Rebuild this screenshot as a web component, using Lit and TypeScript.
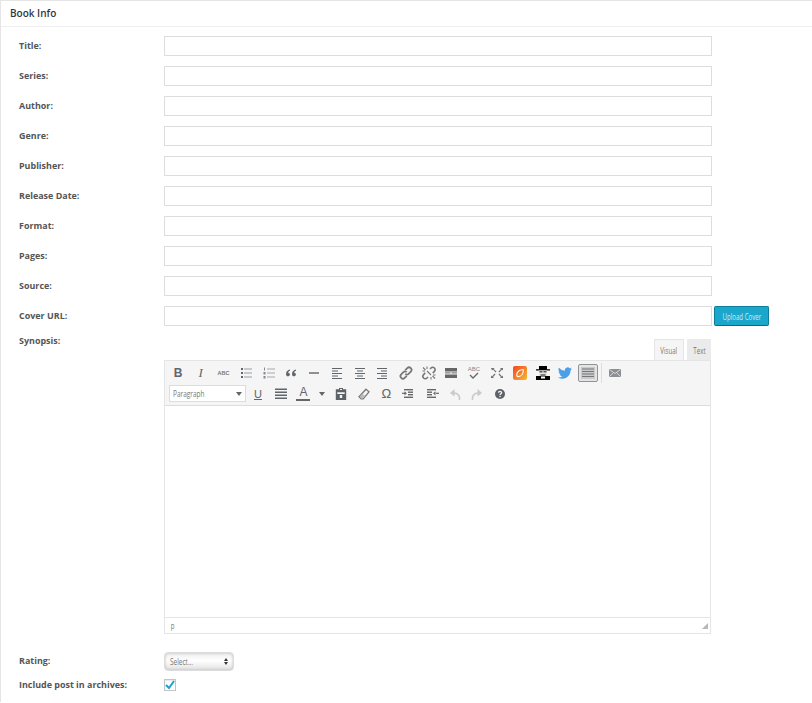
import { LitElement, html, css, svg } from "lit";
import { customElement } from "lit/decorators.js";

const c = "#60666c";
const ic = (body: unknown, size = 16) =>
  html`<svg class="ic" width=${size} height=${size} viewBox="0 0 16 16" fill="none" stroke=${c} stroke-width="1.2">${body}</svg>`;

const align = (rows: [number, number][]) =>
  ic(rows.map(([x, w], i) => svg`<rect x=${x} y=${3 + i * 2.5} width=${w} height="1" fill=${c} stroke="none"/>`));

const icons: Record<string, unknown> = {
  ul: ic(svg`<g fill=${c} stroke="none"><rect x="3" y="3" width="2" height="2"/><rect x="3" y="7" width="2" height="2"/><rect x="3" y="11" width="2" height="2"/><g opacity=".6"><rect x="6" y="3.500" width="8" height="1"/><rect x="6" y="7.500" width="8" height="1"/><rect x="6" y="11.500" width="8" height="1"/></g></g>`),
  ol: ic(svg`<g fill=${c} stroke="none" opacity=".75"><rect x="3" y="2.500" width="1" height="3"/><rect x="2.500" y="7" width="2" height="2.500"/><rect x="2.500" y="11" width="2" height="2.500"/><g opacity=".7"><rect x="6" y="3.500" width="8" height="1"/><rect x="6" y="7.500" width="8" height="1"/><rect x="6" y="11.500" width="8" height="1"/></g></g>`),
  quote: ic(svg`<path fill=${c} stroke="none" d="M7 4.500C4.800 5 3 6.600 3 8.900c0 1.400.9 2.300 1.900 2.300s2-.8 2-1.800-.9-1.700-1.800-1.700C5.200 7 6 6.200 7 5.800zM13 4.500C10.800 5 9 6.600 9 8.900c0 1.400.9 2.300 1.900 2.300s2-.8 2-1.800-.9-1.700-1.800-1.700c.1-.7.900-1.500 1.900-1.900z"/>`),
  hr: ic(svg`<rect x="3" y="7.200" width="10" height="1.600" fill="#777" stroke="none"/>`),
  left: align([[3, 10], [3, 6], [3, 10], [3, 6], [3, 10]]),
  center: align([[3, 10], [5, 6], [3, 10], [5, 6], [3, 10]]),
  right: align([[3, 10], [7, 6], [3, 10], [7, 6], [3, 10]]),
  justify: ic(svg`<g fill=${c} stroke="none"><rect x="2" y="2.500" width="12" height="1.500"/><rect x="2" y="5.500" width="12" height="1.500"/><rect x="2" y="8.500" width="12" height="1.500"/><rect x="2" y="11.500" width="12" height="1.500"/></g>`),
  link: ic(svg`<g stroke="#777" stroke-width="1.700"><path d="M7.200 5.200 9.300 3.100a2.400 2.400 0 0 1 3.500 3.500l-2.200 2.200a2.400 2.400 0 0 1-3.300.1"/><path d="M8.800 10.800 6.700 12.900a2.400 2.400 0 0 1-3.500-3.500l2.200-2.200a2.400 2.400 0 0 1 3.300-.1"/></g>`),
  unlink: ic(svg`<g stroke="#777" stroke-width="1.600"><path d="M9 4 10 3a2.400 2.400 0 0 1 3.400 3.400l-1.600 1.700"/><path d="M7 12 6 13a2.400 2.400 0 0 1-3.400-3.400l1.600-1.700"/><path stroke-width="1.100" d="M2 2.500 4.500 5M11.500 11 14 13.500M6 1.500V4M1.500 6H4M10 12v2.500M12 10h2.500M6 6l4 4"/></g>`),
  more: ic(svg`<g fill="#666" stroke="none"><rect x="2" y="3" width="12" height="3.500"/><rect x="2" y="7.400" width="5.500" height="1"/><rect x="8.500" y="7.400" width="5.500" height="1"/><rect x="2" y="9.500" width="12" height="3.500"/></g>`),
  full: ic(svg`<g fill="#6d7277" stroke="none"><path d="M2 3h3.600L4.600 4l2.900 2.400L6.600 7.400 4 4.600 3 5.600zM14 3v2.600L13 4.600 10.400 7.400 9.500 6.400 12 4l-1-1zM2 13V10.400l1 1L5.600 8.600l.9 1L4 12l1 1zM14 13h-3l1-1L9.500 9.600l.9-1L13 11.400l1-1z"/></g>`),
  paste: ic(svg`<path fill="#5c6268" stroke="none" d="M6 2h4v1.200h3.200v10.800H2.800V3.200H6zM7 3v1h2V3zM4.300 6.200v1.800h7.400V6.200zM6.800 9v3h2.400V9z"/>`),
  eraser: ic(svg`<path stroke="#777" stroke-width="1.300" d="M10 3.200 13 5.800 7.200 12.800H5.200L3 10.800z"/><path fill="#bbb" stroke="none" d="M3.500 10.800 6.300 7.500l2.900 2.500-2.400 2.500H5.300z"/>`),
  outdent: ic(svg`<g fill="#666" stroke="none"><rect x="3" y="3" width="9" height="1.400"/><rect x="7" y="5.500" width="5" height="1.400"/><rect x="7" y="8" width="5" height="1.400"/><rect x="3" y="10.600" width="9" height="1.400"/><rect x="1" y="6.700" width="3" height="1.200"/><path d="M3.500 5.200l2.400 2.100-2.400 2.200z"/></g>`),
  indent: ic(svg`<g fill="#666" stroke="none"><rect x="3" y="3" width="9" height="1.400"/><rect x="3" y="5.500" width="5" height="1.400"/><rect x="3" y="8" width="5" height="1.400"/><rect x="3" y="10.600" width="9" height="1.400"/><rect x="12" y="6.700" width="3" height="1.200"/><path d="M11.500 5.200 9.100 7.300l2.400 2.200z"/></g>`),
  undo: ic(svg`<path stroke="#c8cacb" stroke-width="1.700" d="M12.500 14c.6-3.800-1.400-7-5.800-7"/><path fill="#c8cacb" stroke="none" d="M7.500 3v7.500L3 7z"/>`),
  redo: ic(svg`<path stroke="#c8cacb" stroke-width="1.700" d="M3.500 14c-.6-3.800 1.400-7 5.800-7"/><path fill="#c8cacb" stroke="none" d="M8.500 3v7.500L13 7z"/>`),
  help: ic(svg`<circle cx="8" cy="8" r="5" fill="#5c6268" stroke="none"/><path stroke="#f5f5f5" stroke-width="1.300" d="M6.500 6.800c0-1.900 3.100-1.900 3.100-.1 0 1.200-1.600 1.100-1.600 2.400"/><rect x="7.300" y="9.800" width="1.400" height="1.300" fill="#f5f5f5" stroke="none"/>`),
  mail: ic(svg`<rect x="2" y="4" width="12" height="8" rx=".5" fill="#8b8f93" stroke="none"/><path stroke="#e0e0e0" stroke-width=".9" d="M2.500 4.500l5.500 4 5.500-4M2.500 11.500l4-3.800M13.500 11.500l-4-3.800"/>`),
  orange: html`<svg class="ic" width="14" height="14" viewBox="0 0 14 14"><defs><linearGradient id="og" x1="0" y1="0" x2="1" y2="1"><stop offset="0" stop-color="#ee4724"/><stop offset="1" stop-color="#f6ba30"/></linearGradient></defs><rect width="14" height="14" rx="2" fill="url(#og)"/><path d="M3.800 9.700C3.300 6.300 6.500 3.200 10.300 3.800c.6 3.400-2 6.800-5.300 6.800-.6 0-1.100-.3-1.200-.9z" fill="none" stroke="#fff" stroke-width="1.100"/></svg>`,
  spy: html`<svg class="ic" width="14" height="14" viewBox="0 0 14 14"><path fill="#000" d="M3 0h8v3.300h3v1.200H0V3.300h3zM0 10h3V9h8v1h3v4H0z"/><rect x="3" y="4.500" width="8" height="5.500" fill="#e9e4da"/><rect x="3.500" y="5.200" width="3" height="1.200" fill="#333"/><rect x="7.500" y="5.200" width="3" height="1.200" fill="#333"/><rect x="4.500" y="8" width="5" height="2" fill="#777"/><rect x="5" y="10.500" width="4" height="2" fill="#fff"/></svg>`,
  twitter: html`<svg class="ic" width="14" height="14" viewBox="0 0 24 24"><path fill="#4a9fe8" d="M23.950 4.570a10 10 0 0 1-2.830.780 4.960 4.960 0 0 0 2.160-2.720 9.900 9.900 0 0 1-3.120 1.190 4.920 4.920 0 0 0-8.380 4.480A13.960 13.960 0 0 1 1.640 3.160a4.920 4.920 0 0 0 1.520 6.570 4.900 4.900 0 0 1-2.230-.620v.060a4.920 4.920 0 0 0 3.950 4.830 5 5 0 0 1-2.220.080 4.930 4.930 0 0 0 4.600 3.420A9.870 9.870 0 0 1 0 19.540a13.940 13.940 0 0 0 7.550 2.210c9.050 0 14-7.500 14-13.980 0-.210 0-.420-.020-.630a10 10 0 0 0 2.420-2.570z"/></svg>`,
  kitchen: html`<span class="active"><svg class="ic" width="14" height="12" viewBox="0 0 14 12"><rect width="14" height="12" fill="#c9cacb"/><g fill="#777"><rect x="1" y="1.500" width="12" height="1"/><rect x="1" y="4" width="12" height="1"/><rect x="1" y="6.500" width="12" height="1"/><rect x="1" y="9" width="12" height="1"/></g></svg></span>`,
};

const FIELDS = ["Title", "Series", "Author", "Genre", "Publisher", "Release Date", "Format", "Pages", "Source"];

@customElement("app-root")
export class AppRoot extends LitElement {
  static styles = css`
    :host { display: block; width: 812px; height: 703px; overflow: hidden; background: #fff; font-family: "Open Sans", sans-serif; color: #444; }
    .box { border: 1px solid #e5e5e5; border-width: 1px 0 0 1px; height: 702px; box-sizing: border-box; }
    .head { height: 25px; border-bottom: 1px solid #eee; font-size: 10px; font-weight: 600; line-height: 25px; padding-left: 9px; color: #32373c; }
    .body { padding-top: 4px; }
    .row { display: flex; align-items: center; height: 30px; padding-left: 18px; }
    label { width: 145px; flex: none; font-size: 8.95px; font-weight: 700; color: #555; white-space: nowrap; margin-top: -2px; }
    input.txt { width: 548px; height: 20px; box-sizing: border-box; border: 1px solid #ddd; background: #fff; margin: 0; padding: 0; }
    .upload { margin-left: 2px; width: 55px; height: 20px; box-sizing: border-box; background: #1ba6cc; border: 1px solid #0e7d9c; border-bottom-color: #0a6b87; border-radius: 2px; color: #cfecf5; display: flex; align-items: center; justify-content: center; font-size: 8.5px; white-space: nowrap; }
    .cond { display: inline-block; transform: scaleX(.72); white-space: nowrap; }
    .syn { display: flex; padding-left: 18px; height: 310px; }
    .syn label { padding-top: 4px; height: 12px; line-height: 12px; margin-top: 0; }
    .ed { width: 547px; }
    .tabs { display: flex; justify-content: flex-end; height: 21px; gap: 3px; margin-top: 8px; }
    .tab { height: 21px; box-sizing: border-box; border: 1px solid #e5e5e5; border-bottom: 0; font-size: 8.5px; color: #777; display: flex; align-items: center; justify-content: center; }
    .tab.v { width: 30px; background: #f5f5f5; }
    .tab.t { width: 24px; background: #ebebeb; border-color: #ebebeb; }
    .frame { border: 1px solid #e5e5e5; height: 274px; display: flex; flex-direction: column; box-sizing: border-box; }
    .tb { height: 44px; background: #f5f5f5; border-bottom: 1px solid #ddd; padding-left: 1.7px; flex: none; }
    .tr { display: flex; height: 21px; align-items: center; }
    .tr:first-child { padding-top: 1px; }
    .b { width: 22.7px; flex: none; display: flex; align-items: center; justify-content: center; height: 21px; color: #60666c; }
    .ic { display: block; }
    .ml1 { margin-left: 1px; }
    .tw { margin-left: -1px; margin-right: 1px; }
    .bold { font: 700 12px "Liberation Sans", sans-serif; }
    .it { font: italic 400 13px "Liberation Serif", serif; }
    .abc { font: 700 5.5px "Liberation Sans", sans-serif; color: #777; }
    .u { font: 400 11px "Liberation Sans", sans-serif; text-decoration: underline; }
    .om { font: 400 13px "Liberation Sans", sans-serif; }
    .spell { font: 400 6px "Liberation Sans", sans-serif; display: flex; flex-direction: column; align-items: center; line-height: 6px; color: #888; }
    .active { display: flex; align-items: center; justify-content: center; width: 20px; height: 18px; box-sizing: border-box; border: 1px solid #8f9497; border-radius: 2px; background: #e4e4e4; }
    .sep { width: 1px; height: 20px; background: #ddd; margin: 0 2px 0 1px; flex: none; }
    .color { display: flex; flex-direction: column; align-items: center; font: 400 12px/11px "Liberation Sans", sans-serif; }
    .color i { display: block; width: 14px; height: 2px; background: #666; margin-top: 1px; }
    .caret { width: 0; height: 0; border: 3.5px solid transparent; border-top: 4px solid #60666c; border-bottom: 0; }
    .caret.gap { margin: 1px 5px 0 4px; }
    .fmt { width: 77px; height: 17px; box-sizing: border-box; border: 1px solid #ddd; background: #fff; margin-left: 2.3px; margin-right: .7px; display: flex; align-items: center; justify-content: space-between; padding: 0 3px; font-size: 9px; color: #777; flex: none; }
    .fmt .cond { transform-origin: left center; }
    .area { flex: 1; background: #fff; }
    .status { height: 16px; border-top: 1px solid #e5e5e5; flex: none; display: flex; justify-content: space-between; align-items: center; padding: 0 1px 0 5px; font-size: 8.5px; color: #777; box-sizing: border-box; }
    .rate { margin-top: 9px; }
    .rate.row { height: 22px; }
    .sel { width: 70px; height: 19px; box-sizing: border-box; border: 1px solid #ddd; border-radius: 4px; background: linear-gradient(#eee, #fff 45%, #e2e2e2); box-shadow: inset 0 0 3px #bbb; display: flex; align-items: center; justify-content: space-between; padding: 0 5px; font-size: 9px; color: #777; }
    .sel .cond { transform-origin: left center; }
    .arrows { display: flex; flex-direction: column; gap: 1px; }
    .arrows i { display: block; width: 0; height: 0; border: 2.5px solid transparent; }
    .arrows i:first-child { border-top: 0; border-bottom: 3px solid #333; }
    .arrows i:last-child { border-bottom: 0; border-top: 3px solid #333; }
    .inc.row { height: 24px; margin-top: 1px; }
    .chk { width: 12px; height: 12px; box-sizing: border-box; border: 1px solid #c4c4c4; background: #fff; box-shadow: inset 0 1px 2px rgba(0,0,0,.1); display: flex; align-items: center; justify-content: center; }
  `;

  render() {
    const B = (k: string, cls = "") => html`<span class="b ${cls}">${icons[k]}</span>`;
    return html`<div class="box">
      <div class="head">Book Info</div>
      <div class="body">
        ${FIELDS.map((f) => html`<div class="row"><label>${f}:</label><input class="txt" /></div>`)}
        <div class="row"><label>Cover URL:</label><input class="txt" /><span class="upload"><span class="cond">Upload Cover</span></span></div>
        <div class="syn">
          <label>Synopsis:</label>
          <div class="ed">
            <div class="tabs">
              <span class="tab v"><span class="cond">Visual</span></span>
              <span class="tab t"><span class="cond">Text</span></span>
            </div>
            <div class="frame">
              <div class="tb">
                <div class="tr">
                  <span class="b bold">B</span><span class="b it">I</span><span class="b abc">ABC</span>
                  ${["ul", "ol", "quote", "hr", "left", "center", "right"].map((k) => B(k))}
                  ${B("link", "ml1")}${B("unlink")}${B("more")}
                  <span class="b"><span class="spell">ABC<svg width="10" height="7" viewBox="0 0 10 7" fill="none" stroke="#666" stroke-width="1.3"><path d="M1 3l3 3 5-5" /></svg></span></span>
                  ${B("full")}${B("orange", "ml1")}${B("spy")}${B("twitter", "tw")}${B("kitchen")}
                  <span class="sep"></span>
                  ${B("mail")}
                </div>
                <div class="tr">
                  <span class="fmt"><span class="cond">Paragraph</span><span class="caret"></span></span>
                  <span class="b u">U</span>
                  ${B("justify")}
                  <span class="b"><span class="color">A<i></i></span></span>
                  <span class="caret gap"></span>
                  ${B("paste")}${B("eraser")}
                  <span class="b om">Ω</span>
                  ${["outdent", "indent", "undo", "redo", "help"].map((k) => B(k))}
                </div>
              </div>
              <div class="area"></div>
              <div class="status"><span class="cond">p</span>
                <svg width="8" height="8" viewBox="0 0 8 8" fill="#999"><path d="M7 1v6H1z" opacity=".7"/></svg>
              </div>
            </div>
          </div>
        </div>
        <div class="row rate"><label>Rating:</label><span class="sel"><span class="cond">Select...</span><span class="arrows"><i></i><i></i></span></span></div>
        <div class="row inc"><label>Include post in archives:</label><span class="chk"><svg width="10" height="10" viewBox="0 0 10 10" fill="none" stroke="#1e9fd0" stroke-width="2"><path d="M1 5l3 3 5-7"/></svg></span></div>
      </div>
    </div>`;
  }
}
